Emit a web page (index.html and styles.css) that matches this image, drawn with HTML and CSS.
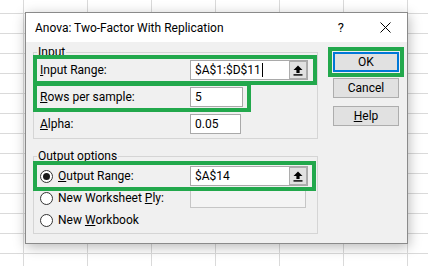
FILE: index.html
```html
<!DOCTYPE html>
<html lang="en">
<head>
<meta charset="utf-8">
<title>Anova: Two-Factor With Replication</title>
<link rel="stylesheet" href="styles.css">
</head>
<body>
<div class="dialog">
  <div class="titlebar">
    <span class="title">Anova: Two-Factor With Replication</span>
    <span class="title-q">?</span>
    <span class="title-close">
      <svg width="11" height="11" viewBox="0 0 11 11"><path d="M0.5 0.5 L10.5 10.5 M10.5 0.5 L0.5 10.5" stroke="#000" stroke-width="1" fill="none"/></svg>
    </span>
  </div>
  <div class="content">
    <div class="groups">
      <fieldset class="group group-input">
        <legend>Input</legend>
        <div class="row hl w-range">
          <span class="lbl"><u>I</u>nput Range:</span>
          <div class="field field-ref">
            <span class="val">$A$1:$D$11</span><span class="caret"></span>
            <span class="ref-btn"><svg width="10" height="11" viewBox="0 0 10 11"><path d="M5 0.5 L9.5 5 L6.6 5 L6.6 8 L3.4 8 L3.4 5 L0.5 5 Z" fill="#000"/><rect x="0.5" y="9.2" width="9" height="1.4" fill="#000"/></svg></span>
          </div>
        </div>
        <div class="row hl w-rows">
          <span class="lbl"><u>R</u>ows per sample:</span>
          <div class="field field-rows"><span class="val">5</span></div>
        </div>
        <div class="row">
          <span class="lbl"><u>A</u>lpha:</span>
          <div class="field field-alpha"><span class="val">0.05</span></div>
        </div>
      </fieldset>
      <fieldset class="group group-output">
        <legend>Output options</legend>
        <div class="row hl w-out">
          <span class="radio checked"></span>
          <span class="opt-lbl"><u>O</u>utput Range:</span>
          <div class="field field-ref">
            <span class="val">$A$14</span>
            <span class="ref-btn"><svg width="10" height="11" viewBox="0 0 10 11"><path d="M5 0.5 L9.5 5 L6.6 5 L6.6 8 L3.4 8 L3.4 5 L0.5 5 Z" fill="#000"/><rect x="0.5" y="9.2" width="9" height="1.4" fill="#000"/></svg></span>
          </div>
        </div>
        <div class="row">
          <span class="radio"></span>
          <span class="opt-lbl">New Worksheet <u>P</u>ly:</span>
          <div class="field field-ply disabled"></div>
        </div>
        <div class="row">
          <span class="radio"></span>
          <span class="opt-lbl">New <u>W</u>orkbook</span>
        </div>
      </fieldset>
    </div>
    <div class="buttons">
      <button class="btn btn-ok">OK</button>
      <button class="btn btn-cancel">Cancel</button>
      <button class="btn btn-help"><u>H</u>elp</button>
    </div>
  </div>
</div>
</body>
</html>
```
FILE: styles.css
```css
html, body {
  margin: 0;
}
body {
  width: 428px;
  height: 266px;
  overflow: hidden;
  box-sizing: border-box;
  padding: 12px 0 0 25px;
  background-color: #fff;
  background-image:
    linear-gradient(to right, #dadada 1px, transparent 1px),
    linear-gradient(to bottom, #dadada 1px, transparent 1px);
  background-size: 64px 20px;
  background-position: 23px 13px;
  font-family: Roboto, "Noto Sans", sans-serif;
  font-size: 12px;
  line-height: 16px;
  color: #000;
}
.dialog {
  width: 383px;
  height: 232px;
  box-sizing: border-box;
  border: 1px solid #8a8a8a;
  background: #f0f0f0;
  box-shadow: 1px 3px 12px rgba(0, 0, 0, 0.28);
}
.titlebar {
  height: 29px;
  background: #fff;
  display: flex;
  align-items: center;
}
.title {
  padding-left: 9px;
}
.title-q {
  margin-left: auto;
  font-size: 13px;
}
.title-close {
  display: flex;
  margin-left: 36px;
  margin-right: 16px;
}
.content {
  display: flex;
  height: 201px;
  padding-left: 7px;
  background: #f0f0f0;
}
.groups {
  width: 285px;
}
.group {
  margin: 0;
  min-width: 0;
  border: 1px solid #d5d5d5;
  padding: 0;
  box-sizing: border-box;
  width: 285px;
}
.group legend {
  margin-left: 3px;
  padding: 0 1px;
  line-height: 16px;
}
.group-input {
  margin-top: 2px;
  padding-bottom: 4px;
}
.group-output {
  margin-top: 9px;
  padding-top: 2px;
  padding-bottom: 3px;
}
.row {
  display: flex;
  align-items: center;
  height: 20px;
  margin-left: 4px;
}
.group-input .row + .row {
  margin-top: 7px;
}
.group-output .row + .row {
  margin-top: 2px;
}
.hl {
  outline: 4px solid #22a84c;
  outline-offset: 1px;
}
.w-range { width: 274px; }
.w-rows { width: 208px; }
.w-out { width: 273px; }
.lbl {
  width: 152px;
  box-sizing: border-box;
  padding-left: 2px;
  flex: none;
}
.opt-lbl {
  width: 132px;
  margin-left: 5px;
  flex: none;
}
.radio {
  width: 13px;
  height: 13px;
  box-sizing: border-box;
  margin-left: 2px;
  border: 1px solid #333;
  border-radius: 50%;
  background: #fff;
  flex: none;
  display: flex;
  align-items: center;
  justify-content: center;
}
.radio.checked::after {
  content: "";
  width: 7px;
  height: 7px;
  border-radius: 50%;
  background: #1a1a1a;
}
.field {
  height: 20px;
  box-sizing: border-box;
  border: 1px solid #a9a9a9;
  background: #fff;
  padding-left: 4px;
  display: flex;
  align-items: center;
  flex: none;
}
.field-ref { width: 118px; }
.field-rows { width: 53px; }
.field-alpha { width: 51px; }
.field-ply {
  width: 116px;
  height: 19px;
  background: #f4f4f4;
  border-color: #c6c6c6;
}
.caret {
  width: 1px;
  height: 14px;
  margin-left: 1px;
  background: #000;
}
.ref-btn {
  margin-left: auto;
  width: 18px;
  height: 18px;
  box-sizing: border-box;
  background: #e1e1e1;
  border: 1px solid #adadad;
  display: flex;
  align-items: center;
  justify-content: center;
}
.buttons {
  margin-left: 15px;
  padding-top: 10px;
  display: flex;
  flex-direction: column;
}
.btn {
  width: 66px;
  height: 20px;
  box-sizing: border-box;
  padding: 0;
  margin: 0;
  background: #e1e1e1;
  border: 1px solid #adadad;
  font-family: Roboto, "Noto Sans", sans-serif;
  font-size: 12px;
  line-height: 16px;
  color: #000;
}
.btn-ok {
  border: 2px solid #0078d7;
  outline: 4px solid #22a84c;
  outline-offset: 1px;
}
.btn-cancel {
  margin-top: 6px;
}
.btn-help {
  margin-top: 8px;
}
```
